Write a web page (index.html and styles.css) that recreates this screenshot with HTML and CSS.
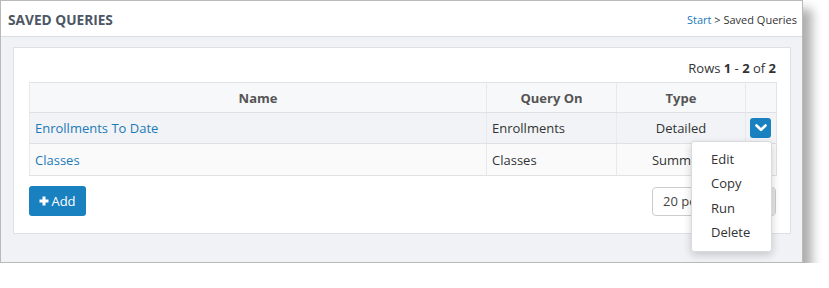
FILE: index.html
```html
<!DOCTYPE html>
<html>
<head>
<meta charset="utf-8">
<link rel="stylesheet" href="styles.css">
</head>
<body>
<div class="frame">
  <div class="header">
    <h1 class="title">SAVED QUERIES</h1>
    <div class="crumbs"><a class="link" href="#">Start</a> &gt; Saved Queries</div>
  </div>
  <div class="content">
    <div class="card">
      <div class="rowcount">Rows <b>1</b> - <b>2</b> of <b>2</b></div>
      <table class="grid">
        <colgroup>
          <col class="c-name">
          <col class="c-on">
          <col class="c-type">
          <col class="c-act">
        </colgroup>
        <thead>
          <tr>
            <th>Name</th>
            <th>Query On</th>
            <th>Type</th>
            <th></th>
          </tr>
        </thead>
        <tbody>
          <tr class="hover">
            <td><a class="link" href="#">Enrollments To Date</a></td>
            <td>Enrollments</td>
            <td class="center">Detailed</td>
            <td class="act">
              <div class="actwrap">
                <span class="chev"><svg width="12" height="8" viewBox="0 0 12 8"><path d="M1.5 1.5 L6 5.8 L10.5 1.5" fill="none" stroke="#fff" stroke-width="2.6" stroke-linecap="round" stroke-linejoin="round"/></svg></span>
                <ul class="menu">
                  <li>Edit</li>
                  <li>Copy</li>
                  <li>Run</li>
                  <li>Delete</li>
                </ul>
              </div>
            </td>
          </tr>
          <tr class="second">
            <td><a class="link" href="#">Classes</a></td>
            <td>Classes</td>
            <td class="center">Summary</td>
            <td></td>
          </tr>
        </tbody>
      </table>
      <div class="footer">
        <button class="btn"><svg width="10" height="10" viewBox="0 0 10 10"><path d="M5 0.5 V9.5 M0.5 5 H9.5" stroke="#fff" stroke-width="3"/></svg>Add</button>
        <div class="select"><span class="selval">20 per page</span><span class="selarrow"></span></div>
      </div>
    </div>
  </div>
</div>
</body>
</html>
```

FILE: styles.css
```css
html, body {
  margin: 0;
  padding: 0;
  background: #fff;
}
body {
  font-family: "Open Sans", "Noto Sans", sans-serif;
  font-size: 13px;
  color: #333;
}
.frame {
  width: 801px;
  height: 261px;
  border: 1px solid #b9b9b9;
  background: #f1f2f5;
  box-shadow: 9px 9px 10px rgba(0, 0, 0, 0.32);
}
.header {
  height: 35px;
  background: #fff;
  border-bottom: 1px solid #dadde1;
  display: flex;
  align-items: center;
  justify-content: space-between;
  padding: 0 5px 0 7px;
}
.title {
  margin: 0;
  font-size: 13.7px;
  font-weight: 700;
  color: #4d5664;
  padding-top: 1px;
}
.crumbs {
  font-size: 11px;
  color: #333;
  padding-top: 2px;
}
.link {
  color: #1d7ab8;
  text-decoration: none;
}
.content {
  padding: 10px 11px 0 12px;
}
.card {
  background: #fff;
  border: 1px solid #dde0e4;
  padding: 0 14px 0 15px;
  box-sizing: border-box;
  height: 187px;
}
.rowcount {
  text-align: right;
  padding-top: 11px;
  height: 23px;
  font-size: 13px;
  color: #333;
}
.rowcount b {
  font-weight: 700;
}
.grid {
  width: 747px;
  border-collapse: collapse;
  table-layout: fixed;
  border: 1px solid #e1e3e6;
}
.c-name { width: 457px; }
.c-on { width: 130px; }
.c-type { width: 129px; }
.c-act { width: 31px; }
.grid th {
  background: #f7f8f9;
  font-weight: 700;
  color: #555;
  height: 29px;
  text-align: center;
  border-left: 1px solid #e8e9eb;
  border-bottom: 1px solid #dfe1e4;
  padding: 0;
}
.grid td {
  height: 30px;
  padding: 0 5px;
  border-left: 1px solid #e8e9eb;
  border-bottom: 1px solid #dfe1e4;
  background: #fafafb;
  white-space: nowrap;
}
.grid tr.second td {
  height: 31px;
}
.grid tr.hover td {
  background: #f1f3f6;
}
.center { text-align: center; }
.actwrap {
  position: relative;
  height: 20px;
}
.chev {
  position: absolute;
  left: -1px;
  top: 0;
  width: 21px;
  height: 20px;
  background: #1a81c0;
  border-radius: 3px;
  display: flex;
  align-items: center;
  justify-content: center;
}
.menu {
  position: absolute;
  top: 23px;
  left: -60px;
  width: 79px;
  margin: 0;
  padding: 5px 0 6px;
  list-style: none;
  background: #fff;
  border: 1px solid #d8dadd;
  border-radius: 3px;
  box-shadow: 0 3px 8px rgba(0, 0, 0, 0.18);
  z-index: 5;
}
.menu li {
  height: 24.4px;
  line-height: 24px;
  padding-left: 19px;
  color: #333;
  font-size: 13px;
}
.footer {
  display: flex;
  justify-content: space-between;
  align-items: center;
  margin-top: 10px;
}
.btn {
  width: 57px;
  height: 30px;
  background: #1a81c0;
  border: none;
  border-radius: 3px;
  color: #fff;
  font-family: "Open Sans", "Noto Sans", sans-serif;
  font-size: 13px;
  display: flex;
  align-items: center;
  justify-content: center;
  gap: 2px;
  padding: 0 0 1px 0;
}
.select {
  width: 124px;
  height: 29px;
  border: 1px solid #ccc;
  border-radius: 4px;
  box-sizing: border-box;
  display: flex;
  align-items: center;
  overflow: hidden;
}
.selval {
  flex: 1;
  padding-left: 10px;
  font-size: 13px;
  color: #444;
}
.selarrow {
  width: 5px;
  height: 100%;
  background: #e6e6e6;
}
```
